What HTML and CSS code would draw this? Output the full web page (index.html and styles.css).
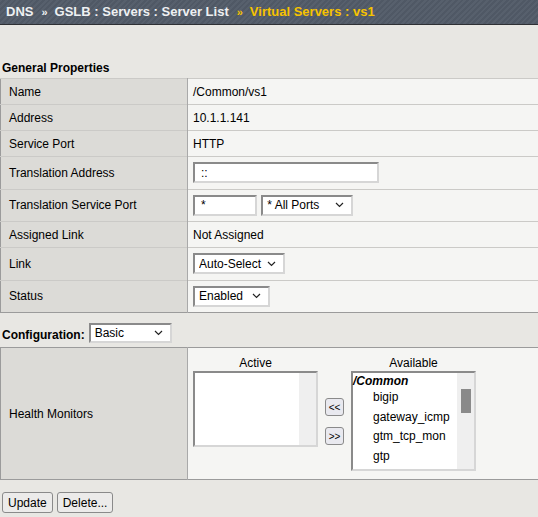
FILE: index.html
```html
<!DOCTYPE html>
<html lang="en">
<head>
  <meta charset="UTF-8" />
  <title>Virtual Servers : vs1</title>
  <link rel="stylesheet" href="styles.css">
</head>
<body>

<div class="crumbs">
  <span>DNS</span><span class="sep">&raquo;</span><span>GSLB : Servers : Server List</span><span class="sep cur">&raquo;</span><span class="cur">Virtual Servers : vs1</span>
</div>

<div class="section-title">General Properties</div>

<table class="props">
  <tr class="short"><td class="lbl">Name</td><td class="val">/Common/vs1</td></tr>
  <tr class="short"><td class="lbl">Address</td><td class="val">10.1.1.141</td></tr>
  <tr class="short"><td class="lbl">Service Port</td><td class="val">HTTP</td></tr>
  <tr class="tall"><td class="lbl">Translation Address</td><td class="val"><input class="field wide" type="text" value="::"></td></tr>
  <tr class="tall">
    <td class="lbl">Translation Service Port</td>
    <td class="val">
      <input class="field port" type="text" value="*">
      <select class="drop ports"><option>* All Ports</option></select>
    </td>
  </tr>
  <tr class="short"><td class="lbl">Assigned Link</td><td class="val">Not Assigned</td></tr>
  <tr class="tall"><td class="lbl">Link</td><td class="val"><select class="drop link"><option>Auto-Select</option></select></td></tr>
  <tr class="tall"><td class="lbl">Status</td><td class="val"><select class="drop status"><option>Enabled</option></select></td></tr>
</table>

<div class="config">
  <span class="config-label">Configuration:</span>
  <select class="drop basic"><option>Basic</option></select>
</div>

<table class="props health">
  <tr>
    <td class="lbl">Health Monitors</td>
    <td class="val">
      <div class="monitors">
        <div class="col">
          <div class="col-head">Active</div>
          <div class="listbox active"><div class="track"></div></div>
        </div>
        <div class="movers">
          <button class="mini">&lt;&lt;</button>
          <button class="mini">&gt;&gt;</button>
        </div>
        <div class="col">
          <div class="col-head">Available</div>
          <div class="listbox avail">
            <div class="items">
              <div class="group">/Common</div>
              <div class="item">bigip</div>
              <div class="item">gateway_icmp</div>
              <div class="item">gtm_tcp_mon</div>
              <div class="item">gtp</div>
            </div>
            <div class="track"><div class="thumb"></div></div>
          </div>
        </div>
      </div>
    </td>
  </tr>
</table>

<div class="actions">
  <button class="btn">Update</button>
  <button class="btn">Delete...</button>
</div>

</body>
</html>
```

FILE: styles.css
```css
body {
  margin: 0;
  padding: 0;
  background: #e8e7e3;
  font-family: "Liberation Sans", Arial, sans-serif;
  font-size: 12px;
  color: #000;
}

.crumbs {
  height: 24px;
  line-height: 24px;
  padding-left: 6px;
  border-bottom: 1px solid #2e3034;
  background: #525b68 repeating-linear-gradient(135deg, rgba(255,255,255,0.03) 0 2px, rgba(0,0,0,0.03) 2px 4px);
  color: #eef0f2;
  font-weight: bold;
  font-size: 13px;
  white-space: nowrap;
}

.crumbs .sep {
  margin: 0 7px 0 8px;
  font-size: 11px;
}

.crumbs .cur {
  color: #f7c300;
}

.section-title {
  margin-top: 36px;
  padding-left: 2px;
  height: 17px;
  line-height: 14px;
  font-weight: bold;
}

.props {
  width: 100%;
  border-collapse: collapse;
  border-top: 1px solid #9b9b9b;
  border-bottom: 1px solid #9b9b9b;
  border-left: 1px solid #9b9b9b;
}

.props td {
  border-top: 1px solid #cbcac7;
  padding: 0;
  vertical-align: middle;
}

.props .lbl {
  width: 178px;
  padding-left: 8px;
  background: #dcdbd7;
  border-right: 1px solid #a9a9a9;
}

.props .val {
  padding-left: 5px;
  background: #f5f5f3;
}

.props tr.short td {
  height: 25px;
}

.props tr.tall td {
  height: 31.5px;
}

.field {
  box-sizing: border-box;
  height: 21px;
  margin: 0;
  padding: 0 6px;
  border: 2px solid;
  border-color: #8a8a8a #d6d6d6 #d6d6d6 #8a8a8a;
  background: #fff;
  font-family: inherit;
  font-size: 12px;
  vertical-align: middle;
}

.field.wide {
  width: 186px;
}

.field.port {
  width: 64px;
}

.drop {
  box-sizing: border-box;
  -webkit-appearance: none;
  appearance: none;
  height: 21px;
  margin: 0;
  padding: 0 18px 0 4px;
  border: 2px solid;
  border-color: #8a8a8a #d6d6d6 #d6d6d6 #8a8a8a;
  border-radius: 0;
  background: #fff url("data:image/svg+xml,%3Csvg xmlns='http://www.w3.org/2000/svg' width='9' height='6'%3E%3Cpath d='M1 1l3.5 3.5L8 1' fill='none' stroke='%23222' stroke-width='1.2'/%3E%3C/svg%3E") no-repeat right 7px center;
  font-family: inherit;
  font-size: 12px;
  color: #000;
  vertical-align: middle;
}

.drop.ports {
  width: 92px;
  margin-left: 1px;
}

.drop.link {
  width: 92px;
}

.drop.status {
  width: 77px;
}

.config {
  height: 34px;
  box-sizing: border-box;
  display: flex;
  align-items: flex-end;
  padding: 0 0 4px 2px;
}

.config-label {
  font-weight: bold;
  font-size: 12px;
  margin-right: 4px;
  padding-bottom: 1px;
}

.drop.basic {
  width: 83px;
  height: 20px;
  padding-top: 0;
  line-height: 14px;
}

.health td {
  height: 131px;
  border-top: none;
}

.monitors {
  display: flex;
  align-items: flex-start;
  padding-top: 8px;
  padding-bottom: 8px;
}

.col {
  display: flex;
  flex-direction: column;
  align-items: center;
}

.col-head {
  height: 15px;
  line-height: 14px;
}

.listbox {
  box-sizing: border-box;
  display: flex;
  border: 2px solid;
  border-color: #8a8a8a #d6d6d6 #d6d6d6 #8a8a8a;
  background: #fff;
  width: 125px;
}

.listbox.active {
  height: 76px;
  justify-content: flex-end;
}

.listbox.avail {
  height: 100px;
}

.items {
  flex: 1;
}

.group {
  font-weight: bold;
  font-style: italic;
  height: 15px;
  line-height: 16px;
  padding-left: 0;
}

.item {
  height: 19.5px;
  line-height: 19.5px;
  padding-left: 20px;
}

.track {
  width: 17px;
  background: #efefef;
  padding-top: 16px;
  display: flex;
  justify-content: center;
}

.thumb {
  width: 10px;
  height: 24px;
  background: #8a8a8a;
}

.movers {
  display: flex;
  flex-direction: column;
  gap: 11px;
  margin: 42px 7px 0 7px;
}

.mini {
  box-sizing: border-box;
  width: 19px;
  height: 18px;
  padding: 0;
  border: 1px solid #8a8a8a;
  border-radius: 3px;
  background: #e9e9ef;
  font-family: inherit;
  font-size: 10px;
  color: #000;
}

.actions {
  display: flex;
  gap: 4px;
  padding: 12px 0 0 2px;
}

.btn {
  box-sizing: border-box;
  height: 21px;
  padding: 0 5px;
  border: 1px solid #8a8a8a;
  border-radius: 3px;
  background: #ecebea;
  font-family: inherit;
  font-size: 12px;
  color: #000;
}
```
